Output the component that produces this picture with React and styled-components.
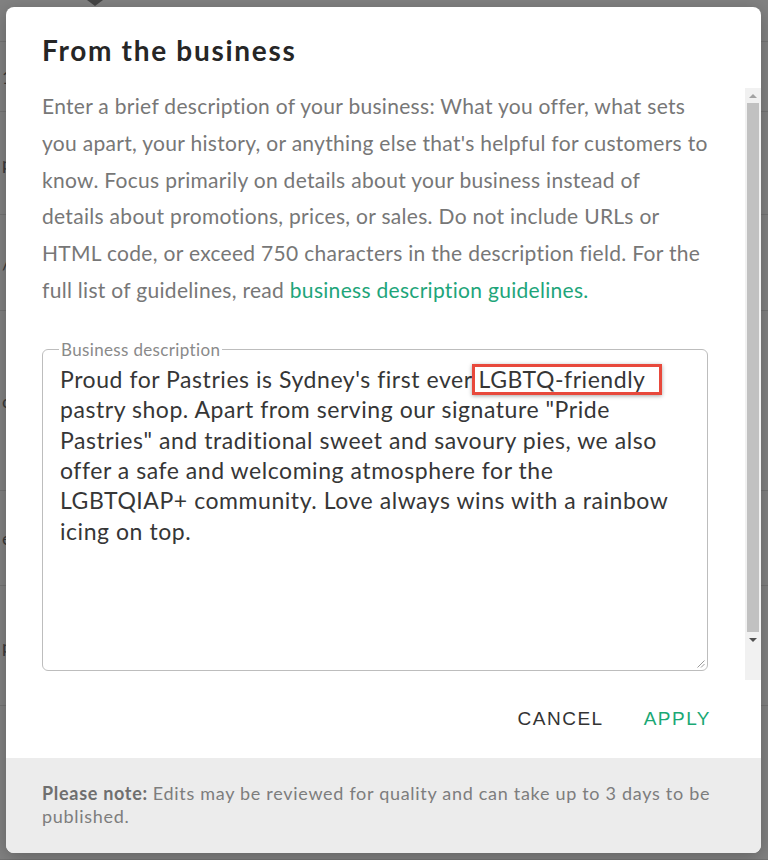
import React from "react";
import styled, { createGlobalStyle } from "styled-components";

const GlobalStyle = createGlobalStyle`
  html, body {
    margin: 0;
    padding: 0;
    background: #7f7f7f;
  }
  * { box-sizing: border-box; }
`;

const Page = styled.div`
  position: relative;
  width: 768px;
  height: 860px;
  overflow: hidden;
  background: #828282;
  font-family: Lato, "Open Sans", sans-serif;
`;

const BehindRow = styled.div`
  height: ${(p) => p.h}px;
  border-bottom: 1px solid #747474;
  padding-left: 2px;
  color: #3a3a3a;
  font-size: 18px;
  line-height: 24px;
  display: flex;
  align-items: center;
`;

const Pointer = styled.div`
  position: absolute;
  top: 0;
  left: 87px;
  width: 0;
  height: 0;
  border-left: 8px solid transparent;
  border-right: 8px solid transparent;
  border-top: 6px solid #444;
`;

const Overlay = styled.div`
  position: absolute;
  inset: 0;
  padding: 7px 7px 7px 6px;
  display: flex;
`;

const Modal = styled.div`
  flex: 1;
  display: flex;
  flex-direction: column;
  background: #fff;
  border-radius: 8px;
  overflow: hidden;
  box-shadow: 0 4px 18px rgba(0, 0, 0, 0.25);
`;

const Header = styled.div`
  height: 81px;
  padding: 26px 36px 0;
`;

const Title = styled.h2`
  margin: 0;
  font-size: 28px;
  line-height: 34px;
  font-weight: 700;
  color: #262626;
  letter-spacing: 1.7px;
`;

const ScrollRow = styled.div`
  height: 592px;
  display: flex;
`;

const ScrollContent = styled.div`
  flex: 1;
  padding: 0 36px;
  overflow: hidden;
`;

const Intro = styled.p`
  margin: 0;
  font-size: 21px;
  line-height: 36.8px;
  letter-spacing: 0.3px;
  color: #777;
  white-space: nowrap;
`;

const Link = styled.a`
  color: #1ea57a;
  text-decoration: none;
`;

const Field = styled.fieldset`
  position: relative;
  margin: 31px 0 0;
  width: 666px;
  height: 331px;
  padding: 0 17px;
  border: 1px solid #bdbdbd;
  border-radius: 6px;
`;

const Legend = styled.legend`
  padding: 0 2px;
  margin-left: -1px;
  font-size: 17px;
  line-height: 20px;
  letter-spacing: 0.35px;
  color: #8a8a8a;
`;

const TextBody = styled.div`
  margin-top: 4px;
  font-size: 23px;
  line-height: 30.4px;
  letter-spacing: 0.55px;
  color: #363636;
  white-space: nowrap;
`;

const Grip = styled.svg`
  position: absolute;
  right: 2px;
  bottom: 2px;
  width: 8px;
  height: 8px;
`;

const Marked = styled.span`
  position: relative;

  &::after {
    content: "";
    position: absolute;
    left: -7px;
    right: -16px;
    top: -1px;
    bottom: -2px;
    border: 3px solid #e8493c;
    box-shadow: 0 1px 4px rgba(0, 0, 0, 0.35);
  }
`;

const Scrollbar = styled.div`
  width: 16px;
  display: flex;
  flex-direction: column;
  background: #f1f1f1;
`;

const Arrow = styled.div`
  height: 15px;
  display: flex;
  align-items: center;
  justify-content: center;

  &::before {
    content: "";
    width: 0;
    height: 0;
    border-left: 4px solid transparent;
    border-right: 4px solid transparent;
    ${(p) =>
      p.up
        ? "border-bottom: 4px solid #a3a3a3;"
        : "border-top: 4px solid #505050;"}
  }
`;

const Thumb = styled.div`
  margin: 0 2px;
  height: 529px;
  background: #c1c1c1;
`;

const Actions = styled.div`
  height: 78px;
  display: flex;
  align-items: center;
  justify-content: flex-end;
  gap: 40px;
  padding-right: 50px;
`;

const ActionButton = styled.button`
  border: none;
  background: none;
  padding: 0;
  font-family: "Liberation Sans", Arial, sans-serif;
  font-size: 19px;
  letter-spacing: 1.5px;
  text-transform: uppercase;
  color: ${(p) => (p.primary ? "#1aa874" : "#333")};
  cursor: pointer;
`;

const Footer = styled.div`
  flex: 1;
  background: #ececec;
  padding: 24px 40px 0 36px;
  font-size: 18px;
  line-height: 23px;
  color: #7d7d7d;
  letter-spacing: 0.7px;
`;

const NoteLabel = styled.strong`
  color: #6f6f6f;
  font-weight: 700;
  margin-right: 5px;
`;

const behindRows = [
  { h: 42, t: "" },
  { h: 70, t: "1" },
  { h: 103, t: "p" },
  { h: 96, t: "/" },
  { h: 180, t: "c" },
  { h: 95, t: "e" },
  { h: 120, t: "p" },
  { h: 154, t: "" },
];

export default function App() {
  return (
    <>
      <GlobalStyle />
      <Page>
        {behindRows.map((r, i) => (
          <BehindRow key={i} h={r.h}>
            {r.t}
          </BehindRow>
        ))}
        <Pointer />
        <Overlay>
          <Modal>
            <Header>
              <Title>From the business</Title>
            </Header>
            <ScrollRow>
              <ScrollContent>
                <Intro>
                  Enter a brief description of your business: What you offer, what sets
                  <br />
                  you apart, your history, or anything else that's helpful for customers to
                  <br />
                  know. Focus primarily on details about your business instead of
                  <br />
                  details about promotions, prices, or sales. Do not include URLs or
                  <br />
                  HTML code, or exceed 750 characters in the description field. For the
                  <br />
                  full list of guidelines, read{" "}
                  <Link href="#">business description guidelines.</Link>
                </Intro>
                <Field>
                  <Legend>Business description</Legend>
                  <TextBody>
                    Proud for Pastries is Sydney's first ever <Marked>LGBTQ-friendly</Marked>
                    <br />
                    pastry shop. Apart from serving our signature "Pride
                    <br />
                    Pastries" and traditional sweet and savoury pies, we also
                    <br />
                    offer a safe and welcoming atmosphere for the
                    <br />
                    LGBTQIAP+ community. Love always wins with a rainbow
                    <br />
                    icing on top.
                  </TextBody>
                  <Grip viewBox="0 0 8 8">
                    <path d="M7.5 0.5 L0.5 7.5 M7.5 4 L4 7.5" stroke="#9a9a9a" strokeWidth="1" fill="none" />
                  </Grip>
                </Field>
              </ScrollContent>
              <Scrollbar>
                <Arrow up />
                <Thumb />
                <Arrow />
              </Scrollbar>
            </ScrollRow>
            <Actions>
              <ActionButton>Cancel</ActionButton>
              <ActionButton primary>Apply</ActionButton>
            </Actions>
            <Footer>
              <NoteLabel>Please note:</NoteLabel>
              Edits may be reviewed for quality and can take up to 3 days to be published.
            </Footer>
          </Modal>
        </Overlay>
      </Page>
    </>
  );
}
